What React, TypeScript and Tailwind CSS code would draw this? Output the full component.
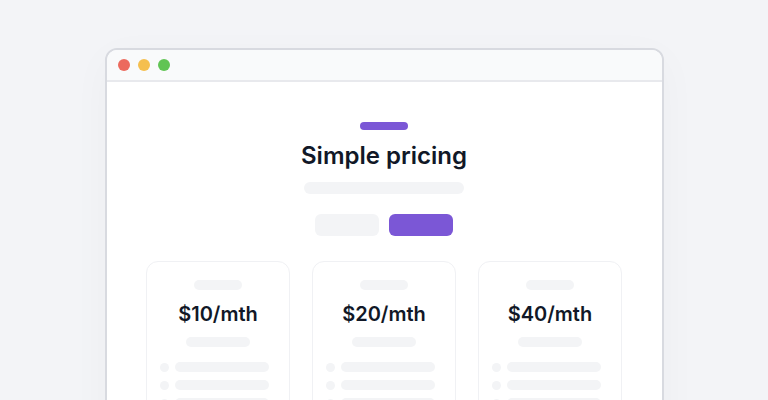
import React from "react";

function Card({ price }: { price: string }) {
  return (
    <div className="w-[144px] h-[160px] rounded-[12px] border border-[#f0f1f4] bg-white flex flex-col items-center">
      <div className="mt-[18px] w-[48px] h-[10px] rounded-full bg-[#f3f4f6]" />
      <div className="mt-[10px] text-[20px] leading-[28px] font-semibold text-[#111827]">{price}</div>
      <div className="mt-[9px] w-[64px] h-[10px] rounded-full bg-[#f3f4f6]" />
      <div className="mt-[15px] w-full pl-[13px] pr-[20px] flex flex-col gap-[8px]">
        {[0, 1, 2].map((i) => (
          <div key={i} className="flex items-center gap-[6px]">
            <div className="w-[9px] h-[9px] rounded-full bg-[#f3f4f6]" />
            <div className="flex-1 h-[10px] rounded-full bg-[#f3f4f6]" />
          </div>
        ))}
      </div>
    </div>
  );
}

export default function App() {
  return (
    <div className="w-[768px] h-[400px] bg-[#f3f4f7] overflow-hidden flex justify-center pt-[48px]" style={{ fontFamily: "Inter, 'Noto Sans', sans-serif" }}>
      <div className="w-[559px] h-[420px] rounded-t-[12px] border-2 border-[#d8dae0] bg-white overflow-hidden shadow-[0_10px_40px_rgba(0,0,0,0.03)] shrink-0">
        <div className="h-[32px] bg-[#f9fafb] border-b-2 border-[#e8e9ed] flex items-center gap-[8px] pl-[11px]">
          <div className="w-[12px] h-[12px] rounded-full bg-[#ec6a5e]" />
          <div className="w-[12px] h-[12px] rounded-full bg-[#f5bf4f]" />
          <div className="w-[12px] h-[12px] rounded-full bg-[#61c454]" />
        </div>
        <div className="flex flex-col items-center">
          <div className="mt-[40px] w-[48px] h-[8px] rounded-full bg-[#7b57d6]" />
          <div className="mt-[10px] text-[24px] leading-[32px] font-semibold text-[#111827]">Simple pricing</div>
          <div className="mt-[10px] w-[160px] h-[12px] rounded-full bg-[#f3f4f6]" />
          <div className="mt-[20px] flex gap-[10px]">
            <div className="w-[64px] h-[22px] rounded-[6px] bg-[#f3f4f6]" />
            <div className="w-[64px] h-[22px] rounded-[6px] bg-[#7b57d6]" />
          </div>
          <div className="mt-[25px] flex gap-[22px]">
            <Card price="$10/mth" />
            <Card price="$20/mth" />
            <Card price="$40/mth" />
          </div>
        </div>
      </div>
    </div>
  );
}
